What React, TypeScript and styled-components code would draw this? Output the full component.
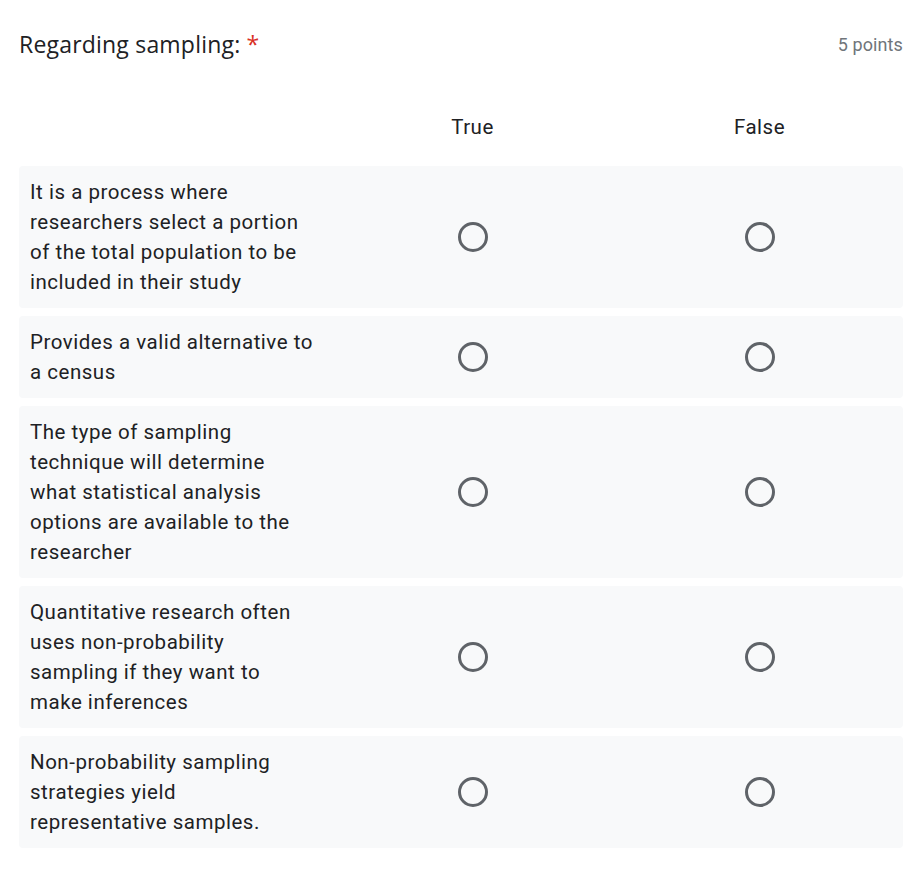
import React from 'react';
import styled, { createGlobalStyle } from 'styled-components';

const GlobalStyle = createGlobalStyle`
  body {
    margin: 0;
    background: #fff;
    font-family: Roboto, "Liberation Sans", Arial, sans-serif;
    color: #202124;
  }
`;

const Wrapper = styled.div`
  width: 884px;
  padding: 26px 14px 40px 19px;
`;

const Header = styled.div`
  display: flex;
  justify-content: space-between;
  align-items: center;
  height: 36px;

  .title {
    font-family: "Open Sans", Roboto, sans-serif;
    font-size: 23px;
    letter-spacing: 0.2px;
    color: #202124;
  }

  .required {
    color: #d93025;
    margin-left: 6px;
  }

  .points {
    font-size: 18px;
    color: #70757a;
    letter-spacing: 0.1px;
  }
`;

const Grid = styled.div`
  margin-top: 50px;
  display: flex;
  flex-direction: column;
  gap: 8px;
`;

const Row = styled.div<{ $head?: boolean }>`
  display: grid;
  grid-template-columns: 310px 1fr 1fr;
  align-items: center;
  background: ${(p) => (p.$head ? 'transparent' : '#f8f9fa')};
  border-radius: 4px;
  padding: ${(p) => (p.$head ? '0' : '11px 0')};
  min-height: ${(p) => (p.$head ? '30px' : 'auto')};
  margin-bottom: ${(p) => (p.$head ? '16px' : '0')};
`;

const Label = styled.div`
  padding-left: 11px;
  max-width: 283px;
  font-size: 20.5px;
  line-height: 30px;
  letter-spacing: 0.52px;
  color: #202124;
`;

const ColHead = styled.div`
  text-align: center;
  font-size: 20.5px;
  letter-spacing: 0.5px;
  color: #202124;
`;

const Cell = styled.div`
  display: flex;
  justify-content: center;
`;

const Radio = styled.div`
  width: 30px;
  height: 30px;
  box-sizing: border-box;
  border: 3px solid #5f6368;
  border-radius: 50%;
`;

const rows = [
  'It is a process where researchers select a portion of the total population to be included in their study',
  'Provides a valid alternative to a census',
  'The type of sampling technique will determine what statistical analysis options are available to the researcher',
  'Quantitative research often uses non-probability sampling if they want to make inferences',
  'Non-probability sampling strategies yield representative samples.',
];

export default function App() {
  return (
    <>
      <GlobalStyle />
      <Wrapper>
        <Header>
          <div className="title">
            Regarding sampling:<span className="required">*</span>
          </div>
          <div className="points">5 points</div>
        </Header>
        <Grid>
          <Row $head>
            <div />
            <ColHead>True</ColHead>
            <ColHead>False</ColHead>
          </Row>
          {rows.map((r) => (
            <Row key={r}>
              <Label>{r}</Label>
              <Cell>
                <Radio />
              </Cell>
              <Cell>
                <Radio />
              </Cell>
            </Row>
          ))}
        </Grid>
      </Wrapper>
    </>
  );
}
